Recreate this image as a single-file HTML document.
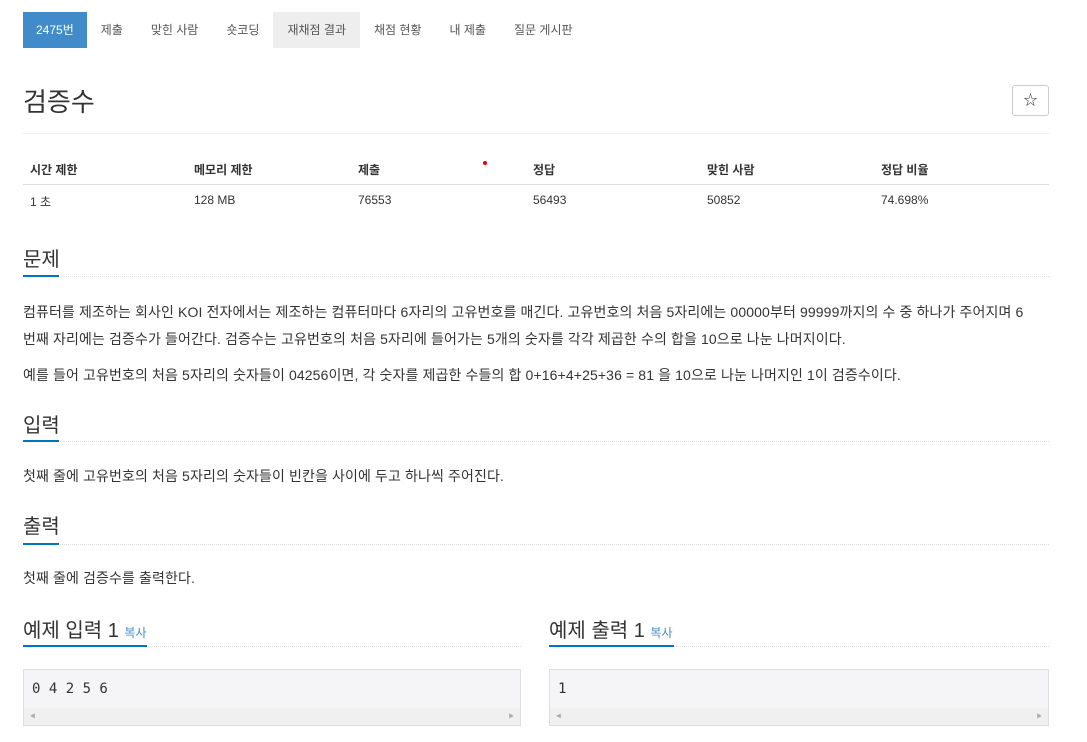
<!DOCTYPE html>
<html><head><meta charset="utf-8"><style>
*{margin:0;padding:0;box-sizing:border-box}
body{width:1087px;height:742px;overflow:hidden;background:#fff;font-family:"Liberation Sans","Noto Sans CJK KR",sans-serif;color:#333;position:relative}
.abs{position:absolute}
.nav{position:absolute;left:23px;top:12px;height:36px;display:flex;font-size:12px;color:#555}
.nav div{height:36px;line-height:36px;padding:0 14px}
.nav .a{background:#428bca;color:#fff;padding:0 13px}
.nav .g{background:#eee;color:#555}
h1{position:absolute;left:23px;top:82px;font-size:26px;font-weight:400;color:#333}
.star{position:absolute;left:1012px;top:85px;width:37px;height:31px;border:1px solid #ccc;border-radius:3px;text-align:center;line-height:29px;font-size:14px;color:#333}
.hr{position:absolute;left:23px;width:1026px;height:1px;background:#eee}
.th,.td{position:absolute;font-size:12px}
.th{font-weight:bold;top:161px}
.td{top:193px;color:#333}
.sec{position:absolute;left:23px;font-size:20px;color:#333}
.ul{position:absolute;height:2px;background:#0076c0}
.dl{position:absolute;height:0;border-top:1px dotted #ddd}
p{position:absolute;left:23px;font-size:14px;line-height:27px;color:#333;width:1026px;letter-spacing:0.12px}
.pre{position:absolute;top:669px;height:57px;border:1px solid #ddd;background:#f5f5f7;font-family:"DejaVu Sans Mono",monospace;font-size:14px;padding:11px 8px;color:#333}
.sb{position:absolute;left:0;right:0;bottom:0;height:17px;background:#f0f0f0;font-size:8px;color:#aaa}
</style></head><body>
<div class="nav"><div class="a">2475번</div><div>제출</div><div>맞힌 사람</div><div>숏코딩</div><div class="g">재채점 결과</div><div>채점 현황</div><div>내 제출</div><div>질문 게시판</div></div>
<h1>검증수</h1>
<div class="star">☆</div>
<div class="hr" style="top:133px"></div>
<div class="th" style="left:30px">시간 제한</div>
<div class="th" style="left:194px">메모리 제한</div>
<div class="th" style="left:358px">제출</div>
<div class="abs" style="left:483px;top:161px;width:4px;height:4px;border-radius:2px;background:#e00"></div>
<div class="th" style="left:533px">정답</div>
<div class="th" style="left:707px">맞힌 사람</div>
<div class="th" style="left:881px">정답 비율</div>
<div class="hr" style="top:184px;background:#ddd"></div>
<div class="td" style="left:30px">1 초</div>
<div class="td" style="left:194px">128 MB</div>
<div class="td" style="left:358px">76553</div>
<div class="td" style="left:533px">56493</div>
<div class="td" style="left:707px">50852</div>
<div class="td" style="left:881px">74.698%</div>

<div class="sec" style="top:243px">문제</div>
<div class="dl" style="left:23px;width:1026px;top:276px"></div><div class="ul" style="left:23px;width:36px;top:275px"></div>
<p style="top:299px">컴퓨터를 제조하는 회사인 KOI 전자에서는 제조하는 컴퓨터마다 6자리의 고유번호를 매긴다. 고유번호의 처음 5자리에는 00000부터 99999까지의 수 중 하나가 주어지며 6<br>번째 자리에는 검증수가 들어간다. 검증수는 고유번호의 처음 5자리에 들어가는 5개의 숫자를 각각 제곱한 수의 합을 10으로 나눈 나머지이다.</p>
<p style="top:362px">예를 들어 고유번호의 처음 5자리의 숫자들이 04256이면, 각 숫자를 제곱한 수들의 합 0+16+4+25+36 = 81 을 10으로 나눈 나머지인 1이 검증수이다.</p>

<div class="sec" style="top:409px">입력</div>
<div class="dl" style="left:23px;width:1026px;top:441px"></div><div class="ul" style="left:23px;width:36px;top:440px"></div>
<p style="top:463px">첫째 줄에 고유번호의 처음 5자리의 숫자들이 빈칸을 사이에 두고 하나씩 주어진다.</p>

<div class="sec" style="top:510px">출력</div>
<div class="dl" style="left:23px;width:1026px;top:544px"></div><div class="ul" style="left:23px;width:36px;top:543px"></div>
<p style="top:565px">첫째 줄에 검증수를 출력한다.</p>

<div class="sec" style="top:614px">예제 입력 1 <span style="font-size:12px;color:#428bca">복사</span></div>
<div class="dl" style="left:23px;width:498px;top:646px"></div><div class="ul" style="left:23px;width:124px;top:645px"></div>
<div class="sec" style="top:614px;left:549px">예제 출력 1 <span style="font-size:12px;color:#428bca">복사</span></div>
<div class="dl" style="left:549px;width:500px;top:646px"></div><div class="ul" style="left:549px;width:125px;top:645px"></div>

<div class="pre" style="left:23px;width:498px">0 4 2 5 6<div class="sb"><span style="position:absolute;left:6px;top:3px">◀</span><span style="position:absolute;right:6px;top:3px">▶</span></div></div>
<div class="pre" style="left:549px;width:500px">1<div class="sb"><span style="position:absolute;left:6px;top:3px">◀</span><span style="position:absolute;right:6px;top:3px">▶</span></div></div>
</body></html>
